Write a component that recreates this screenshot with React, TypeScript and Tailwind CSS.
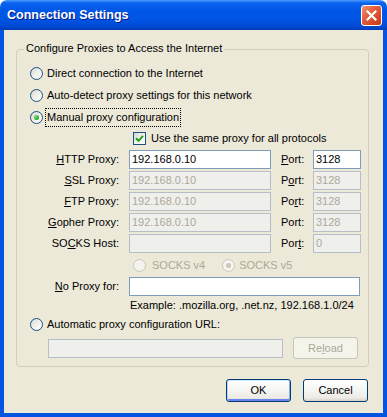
import type { ReactNode } from "react";

function Radio({ checked = false, disabled = false }: { checked?: boolean; disabled?: boolean }) {
  return (
    <span
      className={`relative inline-flex items-center justify-center w-[13px] h-[13px] shrink-0 rounded-full border ${
        disabled
          ? "border-[#cac8bb] bg-[#f4f3ee]"
          : "border-[#1c5180] bg-[linear-gradient(135deg,#d6d5cf_0%,#efeee9_45%,#ffffff_100%)]"
      }`}
    >
      {checked && (
        <span
          className={`w-[5px] h-[5px] rounded-full ${
            disabled ? "bg-[#cac8bb]" : "bg-[radial-gradient(circle_at_35%_35%,#7be07a_0%,#2fb12c_55%,#1a8a18_100%)]"
          }`}
        />
      )}
    </span>
  );
}

function CheckBox() {
  return (
    <span className="inline-flex items-center justify-center w-[13px] h-[13px] shrink-0 border border-[#1c5180] bg-[linear-gradient(135deg,#d6d5cf_0%,#efeee9_45%,#ffffff_100%)]">
      <svg width="9" height="9" viewBox="0 0 9 9">
        <path d="M1 4.2 L3.5 6.8 L8 1.8" fill="none" stroke="#21a121" strokeWidth="2" />
      </svg>
    </span>
  );
}

function TextBox({ value = "", disabled = false, className = "" }: { value?: string; disabled?: boolean; className?: string }) {
  return (
    <div
      className={`h-[19px] border flex items-center pl-[2px] whitespace-nowrap ${
        disabled ? "border-[#b7bec8] bg-[#efefec] text-[#aca899]" : "border-[#7f9db9] bg-white text-black"
      } ${className}`}
    >
      {value}
    </div>
  );
}

function ProxyRow({ label, port, value, portValue, disabled }: { label: ReactNode; port: ReactNode; value: string; portValue: string; disabled: boolean }) {
  return (
    <div className="flex items-center h-[21px]">
      <div className="w-[102px] text-right">{label}</div>
      <TextBox className="ml-[10px] w-[142px]" value={value} disabled={disabled} />
      <div className="ml-[10px] w-[32px]">{port}</div>
      <TextBox className="w-[48px]" value={portValue} disabled={disabled} />
    </div>
  );
}

function XPButton({ children, primary = false, disabled = false, className = "" }: { children: ReactNode; primary?: boolean; disabled?: boolean; className?: string }) {
  return (
    <div
      className={`flex items-center justify-center rounded-[3px] border ${
        disabled
          ? "border-[#c9c7ba] bg-[#f5f4ea] text-[#aca899]"
          : "border-[#003c74] bg-[linear-gradient(to_bottom,#ffffff_0%,#f7f7f4_40%,#ecebe6_85%,#d6d0c5_100%)] text-black"
      } ${primary ? "shadow-[inset_0_1px_0_#cee7ff,inset_1px_0_0_#bcd4f6,inset_-1px_0_0_#89ade4,inset_0_-2px_0_#6982ee]" : ""} ${className}`}
    >
      {children}
    </div>
  );
}

export default function App() {
  return (
    <div className="w-[387px] h-[417px] bg-white font-['Liberation_Sans',Arial,sans-serif] text-[11px] leading-[13px] text-black">
      <div className="flex flex-col w-full h-full">
        {/* title bar */}
        <div className="h-[30px] shrink-0 rounded-t-[7px] flex items-center justify-between pl-[7px] pr-[5px] bg-[linear-gradient(to_bottom,#4d9bff_0px,#0a62ec_3px,#0058e8_10px,#0054e3_20px,#0048d2_27px,#003ab0_30px)]">
          <span className="text-white font-bold text-[12.5px] leading-[15px] [text-shadow:1px_1px_0_#0a1883]">Connection Settings</span>
          <div className="w-[21px] h-[21px] rounded-[3px] border border-white flex items-center justify-center bg-[linear-gradient(135deg,#ef9272_0%,#e2593a_45%,#c63a17_100%)]">
            <svg width="11" height="11" viewBox="0 0 11 11">
              <path d="M1.5 1.5 L9.5 9.5 M9.5 1.5 L1.5 9.5" stroke="white" strokeWidth="2.2" strokeLinecap="square" />
            </svg>
          </div>
        </div>

        {/* body */}
        <div className="flex-1 flex flex-col bg-[#ece9d8] border-x-[4px] border-b-[4px] border-[#0555e3]">
          <div className="relative mt-[19px] ml-[12px] w-[353px] h-[318px] border border-[#d0d0bf] rounded-[4px]">
            <span className="absolute left-[7px] top-[-8px] px-[2px] bg-[#ece9d8]">Configure Proxies to Access the Internet</span>

            <div className="flex flex-col pt-[12px]">
              <div className="flex items-center h-[22px] pl-[13px] gap-[4px]">
                <Radio />
                <span>Direct connection to the Internet</span>
              </div>
              <div className="flex items-center h-[22px] pl-[13px] gap-[4px]">
                <Radio />
                <span>Auto-detect proxy settings for this network</span>
              </div>
              <div className="flex items-center h-[22px] pl-[13px] gap-[2px]">
                <Radio checked />
                <span className="border border-dotted border-black px-[1px] py-[2px]">Manual proxy configuration</span>
              </div>
              <div className="flex items-center h-[21px] pl-[116px] gap-[5px]">
                <CheckBox />
                <span>Use the same proxy for all protocols</span>
              </div>

              <ProxyRow label={<><u>H</u>TTP Proxy:</>} port={<><u>P</u>ort:</>} value="192.168.0.10" portValue="3128" disabled={false} />
              <ProxyRow label={<><u>S</u>SL Proxy:</>} port={<>P<u>o</u>rt:</>} value="192.168.0.10" portValue="3128" disabled />
              <ProxyRow label={<><u>F</u>TP Proxy:</>} port={<>Po<u>r</u>t:</>} value="192.168.0.10" portValue="3128" disabled />
              <ProxyRow label={<><u>G</u>opher Proxy:</>} port={<>Port:</>} value="192.168.0.10" portValue="3128" disabled />
              <ProxyRow label={<>SO<u>C</u>KS Host:</>} port={<>Por<u>t</u>:</>} value="" portValue="0" disabled />

              <div className="flex items-center h-[22px] pl-[116px] text-[#aca899]">
                <Radio disabled />
                <span className="ml-[6px]">SOCKS v4</span>
                <span className="ml-[17px]">
                  <Radio checked disabled />
                </span>
                <span className="ml-[4px]">SOCKS v5</span>
              </div>

              <div className="flex items-center h-[21px]">
                <div className="w-[102px] text-right">
                  <u>N</u>o Proxy for:
                </div>
                <TextBox className="ml-[10px] w-[231px]" />
              </div>

              <div className="flex items-center h-[16px] pl-[113px]">Example: .mozilla.org, .net.nz, 192.168.1.0/24</div>

              <div className="flex items-center h-[22px] pl-[13px] gap-[4px]">
                <Radio />
                <span>Automatic proxy configuration URL:</span>
              </div>

              <div className="flex items-center h-[22px] mt-[2px] pl-[31px]">
                <TextBox className="w-[235px] h-[18px]" disabled />
                <XPButton disabled className="ml-[10px] w-[65px] h-[22px]">
                  Re<u>l</u>oad
                </XPButton>
              </div>
            </div>
          </div>

          <div className="flex justify-end gap-[12px] mt-[12px] pr-[15px]">
            <XPButton primary className="w-[65px] h-[23px]">
              OK
            </XPButton>
            <XPButton className="w-[65px] h-[23px]">Cancel</XPButton>
          </div>
        </div>
      </div>
    </div>
  );
}
